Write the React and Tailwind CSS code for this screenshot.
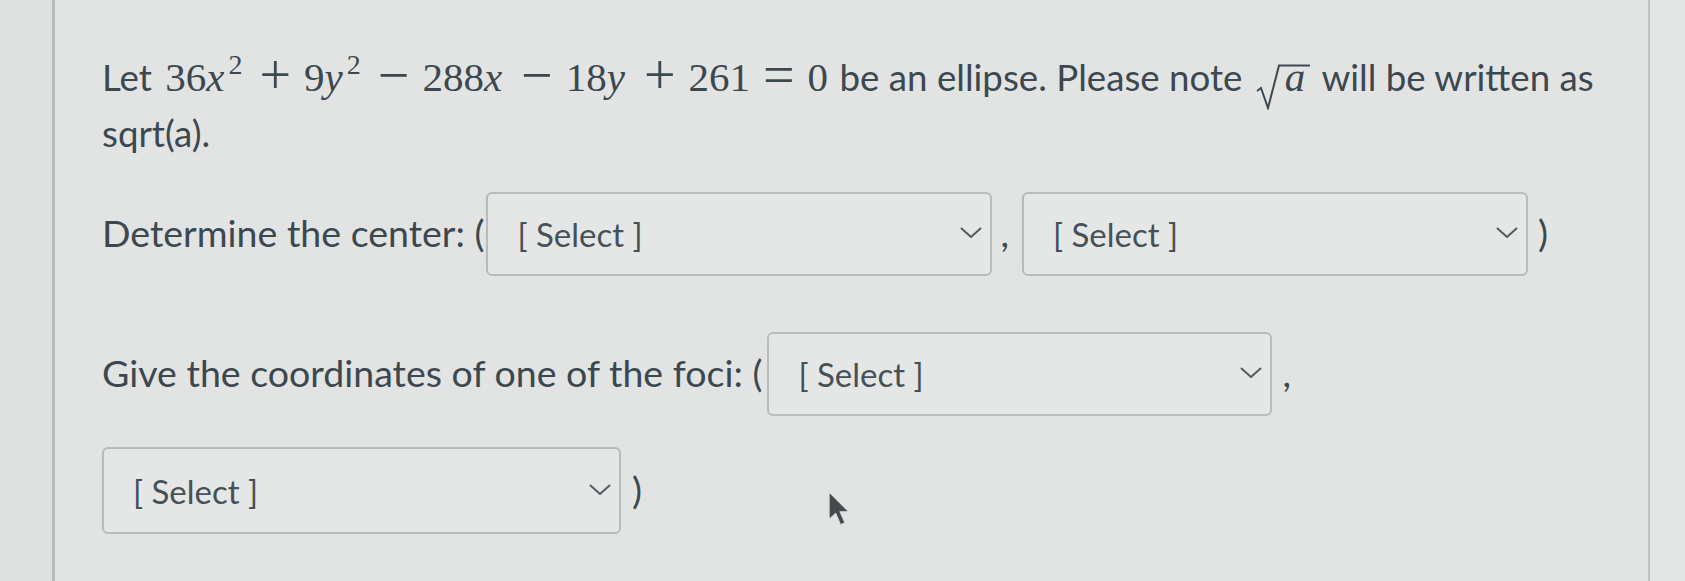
import React from "react";

function Chevron() {
  return (
    <svg width="22" height="12" viewBox="0 0 22 12" className="shrink-0 -mt-[2px]">
      <polyline points="1.5,1.5 11,10 20.5,1.5" fill="none" stroke="#535c61" strokeWidth="2" strokeLinecap="round" strokeLinejoin="round" />
    </svg>
  );
}

function Select({ w, h = "h-[84px]" }) {
  return (
    <div className={`${w} ${h} shrink-0 border-2 border-[#b7bbbc] rounded-[6px] bg-[#e5e7e6] flex items-center justify-between pl-[29px] pr-[8px] text-[#465157] text-[33px] leading-[56px]`}>
      <span>[ Select ]</span>
      <Chevron />
    </div>
  );
}

function Sqrt() {
  return (
    <span className="relative inline-block w-[54px] pl-[29px] ml-[4px] mr-[3px] font-['Liberation_Serif',serif] italic text-[41px] leading-none">
      <svg width="54" height="46" viewBox="0 0 54 46" className="absolute left-0 bottom-[-12px]">
        <path d="M1 27 L5 24 L12 44 L23 1.5 L54 1.5" fill="none" stroke="#3c4850" strokeWidth="2" strokeLinejoin="miter" />
      </svg>
      a
    </span>
  );
}

function Op({ children }) {
  return <span className="relative top-[3px] mx-[13px] text-[56px] leading-[20px]">{children}</span>;
}

function Sup() {
  return <sup className="relative top-[-17px] ml-[4px] mr-[4px] text-[28px]">2</sup>;
}

function MathEq() {
  return (
    <span className="font-['Liberation_Serif',serif] text-[41px] leading-none ml-[4px] mr-[2px]">
      36<i>x</i>
      <Sup />
      <Op>+</Op>9<i>y</i>
      <Sup />
      <Op>−</Op>288<i className="pr-[6px]">x</i>
      <Op>−</Op>18<i className="pr-[6px]">y</i>
      <Op>+</Op>261<Op>=</Op>0
    </span>
  );
}

function Cursor() {
  return (
    <svg width="24" height="37" viewBox="0 0 22 34" className="absolute left-[828px] top-[491px]">
      <path d="M1 1 L1 26 L7 20.5 L11.5 31 L15.5 29.2 L11 19 L19 19 Z" fill="#434a4e" stroke="#d6d9d9" strokeWidth="1" strokeLinejoin="round" />
    </svg>
  );
}

export default function App() {
  return (
    <div className="relative w-[1685px] h-[581px] overflow-hidden bg-[#e2e4e3] flex font-['Lato',sans-serif] text-[#3c4850]">
      <div className="w-[52px] shrink-0 bg-[#dfe1e0]" />
      <div className="w-[3px] shrink-0 bg-[#b9bdbd]" />
      <div className="w-[1593px] shrink-0 pl-[47px] pr-[40px] pt-[49px] text-[36px] leading-[56px]">
        <p className="text-[36.7px]">
          Let <MathEq /> be an ellipse. Please note <Sqrt /> will be written as sqrt(a).
        </p>
        <div className="mt-[31px] flex items-baseline text-[37.5px]">
          <span>Determine the center: (</span>
          <div className="ml-[2px]"><Select w="w-[506px]" /></div>
          <span className="ml-[8px] mr-[13px]">,</span>
          <Select w="w-[506px]" />
          <span className="ml-[10px]">)</span>
        </div>
        <div className="mt-[56px] flex items-baseline text-[37.5px]">
          <span>Give the coordinates of one of the foci: (</span>
          <div className="ml-[5px]"><Select w="w-[505px]" /></div>
          <span className="ml-[10px]">,</span>
        </div>
        <div className="mt-[31px] flex items-baseline text-[37.5px]">
          <Select w="w-[519px]" h="h-[87px]" />
          <span className="ml-[11px]">)</span>
        </div>
      </div>
      <div className="w-[2px] shrink-0 bg-[#c0c4c4]" />
      <div className="flex-1 bg-[#e4e6e5]" />
      <Cursor />
    </div>
  );
}
